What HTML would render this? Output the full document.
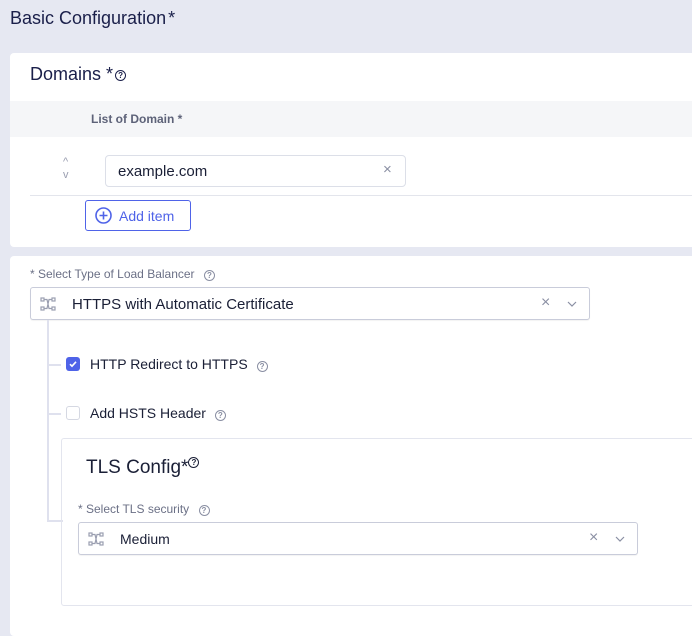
<!DOCTYPE html>
<html><head><style>
*{box-sizing:border-box;margin:0;padding:0}
body{width:692px;height:626px;background:#e6e8f2;font-family:"Liberation Sans",sans-serif;position:relative;overflow:hidden;color:#1a1f36}
.abs{position:absolute}
.card{position:absolute;background:#fff;border-radius:4px}
.q{display:inline-block;width:11px;height:11px;border:1.3px solid #8a8fa3;border-radius:50%;font-size:8px;line-height:9px;text-align:center;color:#8a8fa3;font-weight:bold}
.sel{position:absolute;border:1px solid #c9ccda;border-radius:3px;background:#fff;box-shadow:0 1px 1px rgba(0,0,0,.05)}
.lbl{position:absolute;font-size:12px;color:#6b7086}
</style></head><body>
<div class="abs" style="left:10px;top:8px;font-size:18px;color:#1a1f4a">Basic Configuration<span style="margin-left:2px">*</span></div>

<div class="card" style="left:10px;top:53px;width:690px;height:194px">
  <div class="abs" style="left:20px;top:11px;font-size:18px;color:#1a1f4a">Domains *<span class="q" style="border-color:#1a1f4a;color:#1a1f4a;margin-left:2px;vertical-align:2px">?</span></div>
  <div class="abs" style="left:0;top:48px;width:690px;height:36px;background:#f5f6f8"></div>
  <div class="abs" style="left:81px;top:59px;font-size:12px;font-weight:bold;color:#5d6278">List of Domain *</div>
  <div class="abs" style="left:53px;top:103px;font-size:11px;color:#9a9eb0;line-height:13px">^<br>v</div>
  <div class="abs" style="left:95px;top:102px;width:301px;height:32px;border:1px solid #dcdfe8;border-radius:4px"></div>
  <div class="abs" style="left:108px;top:110px;font-size:15px;color:#1a1f36">example.com</div>
  <div class="abs" style="left:373px;top:108px;font-size:15px;color:#8a8fa3">×</div>
  <div class="abs" style="left:20px;top:142px;width:670px;height:1px;background:#e3e5ec"></div>
  <div class="abs" style="left:75px;top:147px;width:106px;height:31px;border:1px solid #4f63e8;border-radius:3px"></div>
  <svg class="abs" style="left:85px;top:154px" width="17" height="17" viewBox="0 0 17 17"><circle cx="8.5" cy="8.5" r="7.5" fill="none" stroke="#4f63e8" stroke-width="1.6"/><path d="M8.5 4.5v8M4.5 8.5h8" stroke="#4f63e8" stroke-width="1.6"/></svg>
  <div class="abs" style="left:109px;top:155px;font-size:14px;color:#4f63e8">Add item</div>
</div>

<div class="card" style="left:10px;top:256px;width:690px;height:380px">
  <div class="lbl" style="left:20px;top:11px">* Select Type of Load Balancer <span class="q" style="margin-left:6px">?</span></div>
  <div class="sel" style="left:20px;top:31px;width:560px;height:33px"></div>
  <svg class="abs" style="left:30px;top:41px" width="16" height="14" viewBox="0 0 16 14" fill="none" stroke="#9a9eb0" stroke-width="1.2"><rect x="1" y="1" width="3" height="3"/><rect x="12" y="1" width="3" height="3"/><rect x="1" y="10" width="3" height="3"/><rect x="12" y="10" width="3" height="3"/><path d="M4 2.5h3l2 9h3M4 11.5h3l2-9h3"/></svg>
  <div class="abs" style="left:62px;top:40px;font-size:15px">HTTPS with Automatic Certificate</div>
  <div class="abs" style="left:531px;top:38px;font-size:16px;color:#8a8fa3">×</div>
  <svg class="abs" style="left:557px;top:45px" width="10" height="6" viewBox="0 0 10 6"><path d="M1 1l4 4 4-4" fill="none" stroke="#8a8fa3" stroke-width="1.2"/></svg>
  <div class="abs" style="left:37px;top:64px;width:2px;height:202px;background:#dfe1ee"></div>
  <div class="abs" style="left:37px;top:264px;width:16px;height:2px;background:#dfe1ee"></div>
  <div class="abs" style="left:39px;top:108px;width:12px;height:2px;background:#dfe1ee"></div>
  <div class="abs" style="left:39px;top:157px;width:12px;height:2px;background:#dfe1ee"></div>
  <div class="abs" style="left:56px;top:101px;width:14px;height:14px;background:#4f63e8;border-radius:3px"></div>
  <svg class="abs" style="left:56px;top:101px" width="14" height="14" viewBox="0 0 14 14"><path d="M4 7.2l2 2 4-4.4" fill="none" stroke="#fff" stroke-width="1.6"/></svg>
  <div class="abs" style="left:80px;top:100px;font-size:14px">HTTP Redirect to HTTPS <span class="q" style="margin-left:5px">?</span></div>
  <div class="abs" style="left:56px;top:150px;width:14px;height:14px;border:1px solid #d5d8e2;border-radius:3px"></div>
  <div class="abs" style="left:80px;top:149px;font-size:14px">Add HSTS Header <span class="q" style="margin-left:5px">?</span></div>
  <div class="abs" style="left:51px;top:182px;width:640px;height:168px;border:1px solid #e3e5ee;border-radius:3px"></div>
  <div class="abs" style="left:76px;top:201px;font-size:19px">TLS Config*<span class="q" style="border-color:#1a1f36;color:#1a1f36;vertical-align:8px">?</span></div>
  <div class="lbl" style="left:68px;top:246px">* Select TLS security <span class="q" style="margin-left:6px">?</span></div>
  <div class="sel" style="left:68px;top:266px;width:560px;height:33px"></div>
  <svg class="abs" style="left:78px;top:276px" width="16" height="14" viewBox="0 0 16 14" fill="none" stroke="#9a9eb0" stroke-width="1.2"><rect x="1" y="1" width="3" height="3"/><rect x="12" y="1" width="3" height="3"/><rect x="1" y="10" width="3" height="3"/><rect x="12" y="10" width="3" height="3"/><path d="M4 2.5h3l2 9h3M4 11.5h3l2-9h3"/></svg>
  <div class="abs" style="left:110px;top:275px;font-size:14px">Medium</div>
  <div class="abs" style="left:579px;top:273px;font-size:16px;color:#8a8fa3">×</div>
  <svg class="abs" style="left:605px;top:280px" width="10" height="6" viewBox="0 0 10 6"><path d="M1 1l4 4 4-4" fill="none" stroke="#8a8fa3" stroke-width="1.2"/></svg>
</div>
</body></html>
